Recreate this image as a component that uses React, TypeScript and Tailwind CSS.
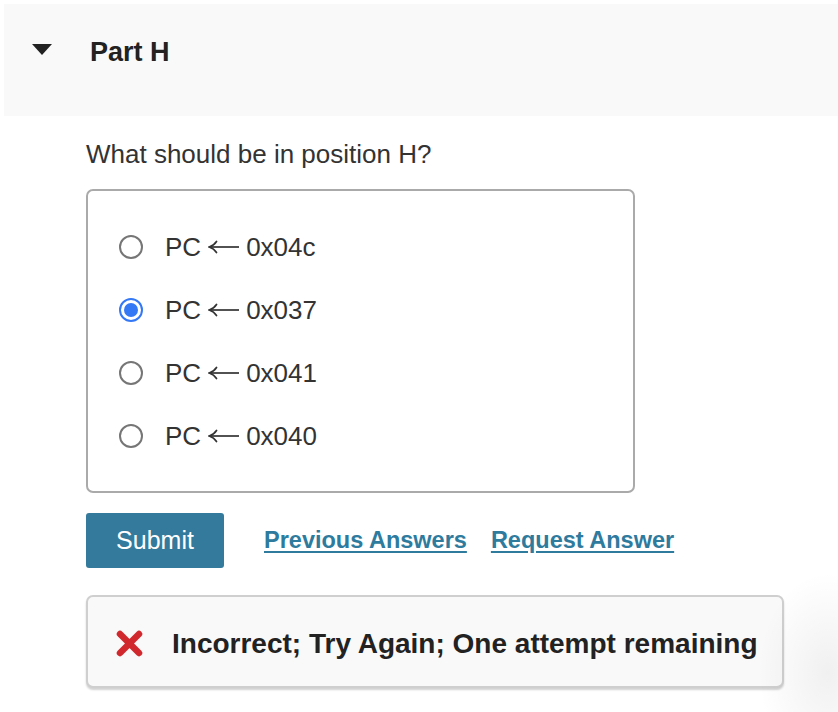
import React from "react";

const options = ["0x04c", "0x037", "0x041", "0x040"];
const selected = 1;

function Radio({ checked }: { checked: boolean }) {
  if (checked) {
    return (
      <span className="w-[24px] h-[24px] rounded-full border-[2px] border-[#3478f6] flex items-center justify-center shrink-0 bg-white">
        <span className="w-[14px] h-[14px] rounded-full bg-[#3478f6]" />
      </span>
    );
  }
  return <span className="w-[24px] h-[24px] rounded-full border-[2px] border-[#767676] bg-white shrink-0" />;
}

function LeftArrow() {
  return (
    <svg width="31" height="14" viewBox="0 0 31 14" className="mx-[7px] shrink-0">
      <path d="M31 7 H2" stroke="#333" strokeWidth="1.7" fill="none" />
      <path d="M8.5 1.5 Q6 5.5 1.2 7 Q6 8.5 8.5 12.5" stroke="#333" strokeWidth="1.7" fill="none" strokeLinecap="round" />
    </svg>
  );
}

export default function App() {
  return (
    <div className="w-[838px] h-[712px] bg-white relative overflow-hidden font-['Liberation_Sans',Arial,sans-serif] text-[#333]">
      <div className="ml-[4px] mt-[4px] h-[112px] bg-[#f9f9f9] flex items-start pt-[32px]">
        <svg width="20" height="11" viewBox="0 0 20 11" className="ml-[28px] mt-[8px] shrink-0">
          <polygon points="0,0 20,0 10,11" fill="#222" />
        </svg>
        <div className="ml-[38px] text-[27px] leading-[32px] font-bold text-[#222]">Part H</div>
      </div>

      <div className="pl-[86px]">
        <div className="mt-[22px] text-[26px] leading-[32px] text-[#333]">What should be in position H?</div>

        <div className="mt-[19px] w-[549px] h-[304px] border-[2px] border-[#aaaaaa] rounded-[7px] pt-[24px] pb-[24px] pl-[31px] flex flex-col">
          {options.map((o, i) => (
            <div key={o} className="h-[63.5px] flex items-center">
              <Radio checked={i === selected} />
              <span className="ml-[22px] text-[26px] leading-[32px] text-[#333] whitespace-pre flex items-center">
                <span>PC</span>
                <LeftArrow />
                <span>{o}</span>
              </span>
            </div>
          ))}
        </div>

        <div className="mt-[20px] flex items-center">
          <button className="w-[138px] h-[55px] bg-[#337a9c] rounded-[3px] text-white text-[25px] leading-none">
            Submit
          </button>
          <a className="ml-[40px] text-[23.5px] font-bold text-[#2e7b9e] underline underline-offset-[3px] decoration-[2px]">
            Previous Answers
          </a>
          <a className="ml-[24px] text-[23.5px] font-bold text-[#2e7b9e] underline underline-offset-[3px] decoration-[2px]">
            Request Answer
          </a>
        </div>

        <div className="mt-[27px] w-[698px] h-[93px] bg-[#f9f9f9] border-[2px] border-[#cfcfcf] rounded-[7px] shadow-[0_2px_2px_rgba(0,0,0,0.18)] flex items-center pl-[28px] pt-[4px]">
          <svg width="27" height="27" viewBox="0 0 27 27" className="shrink-0">
            <line x1="4" y1="4" x2="23" y2="23" stroke="#d0282c" strokeWidth="6.5" strokeLinecap="round" />
            <line x1="23" y1="4" x2="4" y2="23" stroke="#d0282c" strokeWidth="6.5" strokeLinecap="round" />
          </svg>
          <span className="ml-[29px] text-[28px] leading-[32px] font-bold text-[#222]">
            Incorrect; Try Again; One attempt remaining
          </span>
        </div>
      </div>

      <div className="absolute right-[-60px] bottom-[-60px] w-[140px] h-[200px] rounded-full bg-[radial-gradient(closest-side,rgba(0,0,0,0.06),rgba(0,0,0,0))] pointer-events-none" />
    </div>
  );
}
